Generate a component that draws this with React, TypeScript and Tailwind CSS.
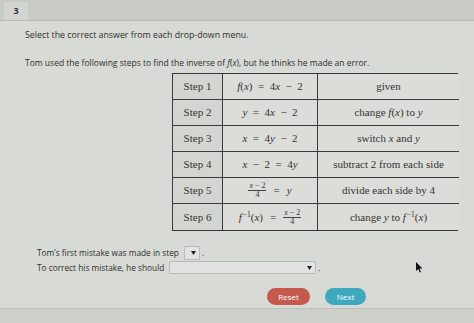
import React from "react";

const serif = { fontFamily: '"Liberation Serif", "DejaVu Serif", serif' };

function X() {
  return <i>x</i>;
}

function Frac() {
  return (
    <span className="inline-flex flex-col items-center text-[8px] leading-[8px]">
      <span className="border-b border-[#444] px-[1px]">
        <X /> − 2
      </span>
      <span>4</span>
    </span>
  );
}

function Inv() {
  return (
    <span>
      <i>f</i>
      <span className="relative -top-[4px] text-[7.5px] ml-[1px]">−1</span>(<X />)
    </span>
  );
}

const rows: { step: string; eq: React.ReactNode; desc: React.ReactNode }[] = [
  {
    step: "Step 1",
    eq: (
      <span>
        <i>f</i>(<X />) &nbsp;=&nbsp; 4<X /> &nbsp;−&nbsp; 2
      </span>
    ),
    desc: <span>given</span>,
  },
  {
    step: "Step 2",
    eq: (
      <span>
        <i>y</i> &nbsp;=&nbsp; 4<X /> &nbsp;−&nbsp; 2
      </span>
    ),
    desc: (
      <span>
        change <i>f</i>(<X />) to <i>y</i>
      </span>
    ),
  },
  {
    step: "Step 3",
    eq: (
      <span>
        <X /> &nbsp;=&nbsp; 4<i>y</i> &nbsp;−&nbsp; 2
      </span>
    ),
    desc: (
      <span>
        switch <X /> and <i>y</i>
      </span>
    ),
  },
  {
    step: "Step 4",
    eq: (
      <span>
        <X /> &nbsp;−&nbsp; 2 &nbsp;=&nbsp; 4<i>y</i>
      </span>
    ),
    desc: <span>subtract 2 from each side</span>,
  },
  {
    step: "Step 5",
    eq: (
      <span className="flex items-center justify-center gap-[7px]">
        <Frac />
        <span>=</span>
        <i>y</i>
      </span>
    ),
    desc: <span>divide each side by 4</span>,
  },
  {
    step: "Step 6",
    eq: (
      <span className="flex items-center justify-center gap-[7px]">
        <Inv />
        <span>=</span>
        <Frac />
      </span>
    ),
    desc: (
      <span>
        change <i>y</i> to <Inv />
      </span>
    ),
  },
];

function Caret() {
  return (
    <svg width="5" height="4" viewBox="0 0 5 4">
      <path d="M0 0 L5 0 L2.5 4 Z" fill="#222" />
    </svg>
  );
}

export default function App() {
  return (
    <div
      className="relative w-[474px] h-[323px] overflow-hidden bg-[#d8dad5] text-[#2e302e] flex flex-col"
      style={{ fontFamily: '"Open Sans", "Noto Sans", sans-serif' }}
    >
      {/* top bar */}
      <div className="h-[21px] bg-[#c9cbc6] border-b border-[#b9bbb6] flex items-end pl-[4px] pt-[3px]">
        <div className="w-[24px] h-[18px] bg-[#d3d5d0] flex items-center justify-center text-[9px] font-bold text-[#333]">
          3
        </div>
      </div>

      <div className="pl-[25px] pt-[9px] text-[8.8px] leading-[11px]">
        Select the correct answer from each drop-down menu.
      </div>
      <div className="pl-[25px] pt-[16px] text-[8.5px] leading-[11px]">
        Tom used the following steps to find the inverse of <i>f</i>(<i>x</i>), but he thinks he made an error.
      </div>

      {/* table */}
      <div className="ml-[172px] mt-[5px] w-[286px]" style={serif}>
        <div className="grid grid-cols-[50px_95px_141px] border border-[#3a3a3a] text-[11px] text-[#333]">
          {rows.map((r, i) => (
            <React.Fragment key={i}>
              <div
                className={`h-[26px] flex items-center justify-center bg-[#d3d5d0] border-r border-[#3a3a3a] ${
                  i < rows.length - 1 ? "border-b" : ""
                }`}
              >
                {r.step}
              </div>
              <div
                className={`h-[26px] flex items-center justify-center bg-[#dcddd9] border-r border-[#3a3a3a] ${
                  i < rows.length - 1 ? "border-b" : ""
                }`}
              >
                {r.eq}
              </div>
              <div
                className={`h-[26px] flex items-center justify-center bg-[#dcddd9] border-[#3a3a3a] ${
                  i < rows.length - 1 ? "border-b" : ""
                }`}
              >
                {r.desc}
              </div>
            </React.Fragment>
          ))}
        </div>
      </div>

      {/* answers */}
      <div className="pl-[37px] mt-[15px] flex flex-col gap-[1px] text-[8.3px] leading-[10px]">
        <div className="flex items-center h-[14px]">
          <span>Tom’s first mistake was made in step</span>
          <span className="ml-[5px] w-[16px] h-[14px] bg-[#e2e3e0] border border-[#b8bab5] rounded-[1px] flex items-center justify-end pr-[3px]">
            <Caret />
          </span>
          <span className="ml-[2px]">.</span>
        </div>
        <div className="flex items-center h-[13px]">
          <span>To correct his mistake, he should</span>
          <span className="ml-[5px] w-[147px] h-[13px] bg-[#e2e3e0] border border-[#b8bab5] rounded-[1px] flex items-center justify-end pr-[3px]">
            <Caret />
          </span>
          <span className="ml-[2px]">.</span>
        </div>
      </div>

      {/* buttons */}
      <div className="mt-[14px] ml-[267px] flex gap-[15px] text-[8px] text-white">
        <button className="w-[43px] h-[17px] rounded-full bg-[#c45a4e] flex items-center justify-center">
          Reset
        </button>
        <button className="w-[41px] h-[17px] rounded-full bg-[#3fa8be] flex items-center justify-center">
          Next
        </button>
      </div>

      <div className="mt-auto h-[15px] bg-[#cdcfca] border-t border-[#bdbfba]" />

      {/* mouse cursor overlay */}
      <svg className="absolute left-[416px] top-[262px]" width="8" height="11" viewBox="0 0 8 11">
        <path d="M0 0 L0 9 L2.2 7 L3.8 10.5 L5 10 L3.5 6.6 L6.5 6.6 Z" fill="#111" />
      </svg>
    </div>
  );
}
